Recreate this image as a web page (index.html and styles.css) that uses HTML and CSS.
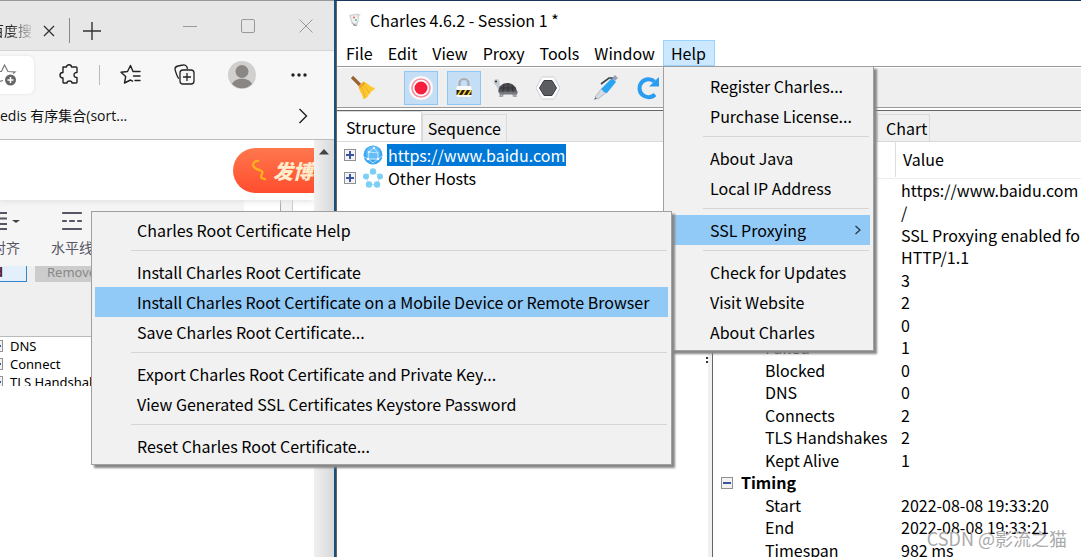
FILE: index.html
```
<!DOCTYPE html>
<html lang="en">
<head>
<meta charset="utf-8">
<title>Charles 4.6.2 - Session 1 *</title>
<link rel="stylesheet" href="styles.css">
</head>
<body>
<div class="desktop">
  <section class="browser" aria-label="Browser">
    <header class="tabstrip">
      <span class="tab-title">百度搜</span>
      <button class="tab-close" aria-label="Close tab"><svg width="12" height="12" viewBox="0 0 12 12" fill="none" stroke="#333" stroke-width="1.3"><path d="M1 1l10 10M11 1L1 11"/></svg></button>
      <i class="tab-sep"></i>
      <button class="tab-new" aria-label="New tab"><svg width="18" height="18" viewBox="0 0 18 18" fill="none" stroke="#333" stroke-width="1.4"><path d="M9 0v18M0 9h18"/></svg></button>
      <div class="win-controls">
        <button aria-label="Minimize"><svg width="14" height="14" viewBox="0 0 14 14" fill="none" stroke="#999"><path d="M0 7.5h14"/></svg></button>
        <button aria-label="Maximize"><svg width="14" height="14" viewBox="0 0 14 14" fill="none" stroke="#999"><rect x=".5" y=".5" width="13" height="13" rx="1.5"/></svg></button>
        <button aria-label="Close"><svg width="14" height="14" viewBox="0 0 14 14" fill="none" stroke="#999"><path d="M.5.5l13 13M13.5.5l-13 13"/></svg></button>
      </div>
    </header>
    <div class="navbar">
      <div class="address-end">
        <button aria-label="Add to favorites"><svg width="20" height="24" viewBox="0 0 20 24" fill="none" stroke="#777" stroke-width="1.2"><path d="M-2 9.500h3.500L4.500 3 8 9.500l7 .5-2 1.500M0 19.500l3-1"/><circle cx="10.500" cy="18" r="5.500" fill="#666" stroke="none"/><path stroke="#fff" stroke-width="1.500" d="M10.500 15v6M7.500 18h6"/></svg></button>
      </div>
      <div class="nav-tools">
        <div class="nav-group">
        <button aria-label="Extensions"><svg width="20" height="22" viewBox="0 0 20 22" fill="none" stroke="#222" stroke-width="1.400" stroke-linejoin="round"><path d="M4 3h3.500c0-3 5-3 5 0H17a1 1 0 0 1 1 1v4.500c-3.500-.5-4.500 5 0 5V18a1 1 0 0 1-1 1h-4c0-1-1-2-2.500-2S8 18 8 19H5a1 1 0 0 1-1-1v-4c-4 0-4-5.500 0-5.500z"/></svg></button>
        <i class="nav-sep"></i>
        <button aria-label="Favorites"><svg width="22" height="22" viewBox="0 0 22 22" fill="none" stroke="#222" stroke-width="1.400" stroke-linejoin="round" stroke-linecap="round"><path d="M20 7.500h-7L10.500 1.500 7.500 7.500l-6.500.7 4.700 4.300-1.200 6.500 6-3 2 1.200M13.500 12H20M15 16.500h5"/></svg></button>
        </div>
        <button aria-label="Collections"><svg width="22" height="22" viewBox="0 0 22 22" fill="none" stroke="#222" stroke-width="1.300"><path d="M5 14.500C3.500 14 1 6 1 5c0-2 1-2.500 3-3l5-1c2-.5 3 0 4 2l.5 2"/><rect x="6" y="6" width="14" height="14" rx="3"/><path d="M13 9v8M9 13h8"/></svg></button>
        <button aria-label="Profile"><svg width="28" height="28" viewBox="0 0 28 28"><circle cx="14" cy="14" r="14" fill="#d2d0ce"/><circle cx="14" cy="10.500" r="6.500" fill="#8a8684"/><path d="M4 23c3-7 17-7 20 0a14 14 0 0 1-20 0z" fill="#8a8684"/></svg></button>
        <button aria-label="More"><svg width="22" height="6" viewBox="0 0 22 6" fill="#222"><circle cx="5" cy="3" r="1.700"/><circle cx="11" cy="3" r="1.700"/><circle cx="17" cy="3" r="1.700"/></svg></button>
      </div>
    </div>
    <nav class="bookmarks">
      <a href="#">edis 有序集合(sort...</a>
      <button aria-label="More bookmarks"><svg width="10" height="16" viewBox="0 0 10 16" fill="none" stroke="#222" stroke-width="1.400"><path d="M1.500 1l7 7-7 7"/></svg></button>
    </nav>
    <div class="viewport">
      <div class="page">
        <div class="page-head">
          <button class="publish"><svg width="16" height="24" viewBox="0 0 16 24" fill="none" stroke="#ffb21a" stroke-width="2.200"><path d="M8 2C3 1 0 6 4 9s9 2 7 6-1 4 4 5.500"/></svg><span>发博</span></button>
        </div>
        <div class="editor">
          <div class="editor-tools">
            <button class="tool align"><span class="tool-icon"><svg width="20" height="20" viewBox="0 0 20 20" stroke="#555566" stroke-width="2"><path d="M-2 2h9M-2 7.500h9M-2 13h9M-2 18h9"/><path d="M12 9h8l-4 3z" fill="#444" stroke="none"/></svg></span><span>对齐</span></button>
            <button class="tool"><span class="tool-icon"><svg width="20" height="20" viewBox="0 0 20 20" stroke="#555566" stroke-width="2.200" stroke-linecap="round"><path d="M1 2h18M1 10h3M8 10h4M16 10h3M1 18h18"/></svg></span><span>水平线</span></button>
          </div>
          <div class="editor-gutter"></div>
          <div class="editor-edge"></div>
        </div>
        <div class="capture">
          <div class="capture-buttons"><span class="mini-add">d</span><span class="mini-remove">Remove</span></div>
          <ul class="mini-tree"><li><i class="box"></i>DNS</li><li><i class="box"></i>Connect</li><li><i class="box"></i>TLS Handshakes</li></ul>
        </div>
      </div>
      <div class="scrollbar"><svg width="10" height="6" viewBox="0 0 10 6"><path d="M0 5.500L5 0l5 5.500z" fill="#444"/></svg></div>
    </div>
  </section>

  <section class="charles" aria-label="Charles">
    <header class="titlebar">
      <svg width="14" height="16" viewBox="0 0 14 16"><path d="M1 3l8-1.500 4 1-2 1.500-.5 6-3 3.500-4-2z" fill="#d4d4d4"/><path d="M3 4l6-1 1 5-3 4-3-3z" fill="#f2f2f2"/><circle cx="6" cy="5.500" r="1" fill="#d66"/><circle cx="8" cy="8" r="1" fill="#5b9"/><path d="M4 11l4 2 2-2-1.500 3H6z" fill="#999"/></svg>
      <h1>Charles 4.6.2 - Session 1 *</h1>
    </header>
    <nav class="menubar">
      <button>File</button><button>Edit</button><button>View</button><button>Proxy</button><button>Tools</button><button>Window</button><button class="open">Help</button>
    </nav>
    <div class="toolbar">
      <button aria-label="Clear"><svg width="26" height="26" viewBox="0 0 26 26"><path d="M2 2l8 8" stroke="#9a6432" stroke-width="3.200"/><path d="M9 12l5-5c4 1 6 5 11 6-1 3-3 2-4 4s-2 2-3 4-3 3-5 3c0-5-4-7-4-12z" fill="#fdc82f"/><path d="M8.500 11.500l5-5 2 2-5.500 5.500z" fill="#f0a51f"/><path d="M12 13l3 9M14.500 11l5 7" stroke="#eead2b" fill="none"/></svg></button>
      <button class="on record" aria-label="Record"><svg width="26" height="26" viewBox="0 0 26 26"><circle cx="13" cy="13" r="12" fill="#fff" stroke="#e8e8ee"/><circle cx="13" cy="13" r="9" fill="#fff" stroke="#f590a2" stroke-width="1.700"/><circle cx="13" cy="13" r="6.500" fill="#f6203d"/></svg></button>
      <button class="on" aria-label="SSL proxying"><svg width="26" height="26" viewBox="0 0 26 26"><path d="M8.500 12V8.500a4.500 4.500 0 0 1 9 0V12" fill="none" stroke="#a9abb0" stroke-width="2.200"/><rect x="5.500" y="11" width="15" height="11" rx="1.500" fill="#fafafa"/><path d="M5.500 15h15v5h-15z" fill="#222"/><path d="M6 20l3-5h2l-3 5zM11 20l3-5h2l-3 5zM16 20l3-5h1.500v1L18 20z" fill="#fdc82f"/></svg></button>
      <button aria-label="Throttle"><svg width="26" height="26" viewBox="0 0 26 26"><path d="M7 18h4l-1 4H6zM19 18h4l1 4h-4z" fill="#a4a7ae"/><path d="M.5 7c0-4 6-4 6 0 0 4 1 7 4 9l-3 2C4 16 5 11 2 10z" fill="#c3cad2"/><circle cx="3" cy="6.500" r="1" fill="#222"/><path d="M5.500 17C5 5 23 5 24 17z" fill="#4c4c51"/><path d="M5 16.500h20l-1 3H7z" fill="#77797f"/><path d="M7 13h16M11 9l-1 8M15 8v9M19 10l1 7" stroke="#2b2b30" stroke-width=".7" fill="none"/></svg></button>
      <button aria-label="Breakpoints"><svg width="26" height="26" viewBox="0 0 26 26"><path d="M7 2h12l6 11-6 11H7L1 13z" fill="#fff" stroke="#d0d0d8"/><path d="M9 5.500h8l4.500 7.500-4.500 7.500H9L4.500 13z" fill="#5b5d61" stroke="#3b3d41"/></svg></button>
      <button class="pen" aria-label="Compose"><svg width="26" height="26" viewBox="0 0 26 26"><path d="M1 25l2-4 2 2z" fill="#555b66"/><path d="M2 22l7-9 5 4-9 7z" fill="#d5dae3" stroke="#aab1bd" stroke-width=".8"/><path d="M8.500 13.500L19 3l4 4-9 11c-2 0-5-2-5.500-4.500z" fill="#2ba4f2"/><path d="M8 9l8-6 4 0" stroke="#3d4148" stroke-width="1.600" fill="none"/><path d="M20.500 4.500l3-3" stroke="#9aa1b0" stroke-width="4"/></svg></button>
      <button aria-label="Repeat"><svg width="26" height="26" viewBox="0 0 26 26"><path d="M19.500 6.500a9 9 0 1 0 .5 13" fill="none" stroke="#2b9df0" stroke-width="4"/><path d="M24 2v9.500h-10z" fill="#2b9df0"/></svg></button>
    </div>
    <main class="panes">
      <section class="nav-pane">
        <div class="tabs"><button class="active">Structure</button><button>Sequence</button></div>
        <ul class="tree">
          <li><i class="box"></i><svg width="20" height="20" viewBox="0 0 20 20"><circle cx="10" cy="10" r="9.500" fill="#3aa4ef"/><circle cx="10" cy="8" r="7" fill="#63bdf7"/><path d="M5 14L6 7l5-4 4 5v6zM6 7l9 1M1 12l4 2 5 4 5-4 4-3" fill="none" stroke="#d8f0ff" stroke-width=".8"/><g fill="#fff"><circle cx="5" cy="14" r="1.300"/><circle cx="15" cy="14" r="1.300"/><circle cx="11" cy="3" r="1"/><circle cx="6" cy="7" r="1"/></g></svg><span class="selected">https://www.baidu.com</span></li>
          <li><i class="box"></i><svg width="20" height="20" viewBox="0 0 20 20"><path d="M10 3.500l7 5-3 8H6l-3-8z" fill="none" stroke="#bfe6f8"/><g fill="#7dd0f5"><circle cx="10" cy="3.500" r="3.200"/><circle cx="17" cy="8.500" r="3"/><circle cx="14" cy="16.500" r="3.200"/><circle cx="6" cy="16.500" r="3.200"/><circle cx="3" cy="8.500" r="3"/></g></svg><span>Other Hosts</span></li>
        </ul>
      </section>
      <div class="splitter"></div>
      <section class="detail-pane">
        <div class="tabs"><button class="chart">Chart</button></div>
        <table>
          <thead><tr><th></th><th><span>Value</span></th></tr></thead>
          <tbody>
            <tr><td></td><td>https://www.baidu.com</td></tr>
            <tr><td></td><td>/</td></tr>
            <tr><td></td><td>SSL Proxying enabled for</td></tr>
            <tr><td></td><td>HTTP/1.1</td></tr>
            <tr><td></td><td>3</td></tr>
            <tr><td></td><td>2</td></tr>
            <tr><td></td><td>0</td></tr>
            <tr><td>Failed</td><td>1</td></tr>
            <tr><td>Blocked</td><td>0</td></tr>
            <tr><td>DNS</td><td>0</td></tr>
            <tr><td>Connects</td><td>2</td></tr>
            <tr><td>TLS Handshakes</td><td>2</td></tr>
            <tr><td>Kept Alive</td><td>1</td></tr>
            <tr class="group"><td><i class="box minus"></i>Timing</td><td></td></tr>
            <tr><td>Start</td><td>2022-08-08 19:33:20</td></tr>
            <tr><td>End</td><td>2022-08-08 19:33:21</td></tr>
            <tr><td>Timespan</td><td>982 ms</td></tr>
          </tbody>
        </table>
      </section>
    </main>
  </section>

  <div class="menu help-menu" role="menu">
    <button role="menuitem">Register Charles...</button>
    <button role="menuitem">Purchase License...</button>
    <hr>
    <button role="menuitem">About Java</button>
    <button role="menuitem">Local IP Address</button>
    <hr>
    <button role="menuitem" class="hot">SSL Proxying<svg width="6" height="10" viewBox="0 0 6 10" fill="none" stroke="#234" stroke-width="1.200"><path d="M.5 1L5 5 .5 9"/></svg></button>
    <hr>
    <button role="menuitem">Check for Updates</button>
    <button role="menuitem">Visit Website</button>
    <button role="menuitem">About Charles</button>
  </div>
  <div class="menu ssl-menu" role="menu">
    <button role="menuitem">Charles Root Certificate Help</button>
    <hr>
    <button role="menuitem">Install Charles Root Certificate</button>
    <button role="menuitem" class="hot">Install Charles Root Certificate on a Mobile Device or Remote Browser</button>
    <button role="menuitem">Save Charles Root Certificate...</button>
    <hr>
    <button role="menuitem">Export Charles Root Certificate and Private Key...</button>
    <button role="menuitem">View Generated SSL Certificates Keystore Password</button>
    <hr>
    <button role="menuitem">Reset Charles Root Certificate...</button>
  </div>
  <div class="watermark">CSDN @影流之猫</div>
</div>
</body>
</html>
```
FILE: styles.css
```
* { box-sizing: border-box; }
body {
  margin: 0;
  font: 16px/20px "Noto Sans CJK SC", "Noto Sans", sans-serif;
  color: #000;
}
button {
  margin: 0;
  padding: 0;
  border: 0;
  background: none;
  font: inherit;
  color: inherit;
  text-align: left;
  white-space: nowrap;
}
svg { display: block; flex: none; }
ul { margin: 0; padding: 0; list-style: none; }
.desktop { position: relative; display: flex; height: 100vh; overflow: hidden; }

/* Browser window */
.browser {
  flex: 0 0 334px;
  display: flex;
  flex-direction: column;
  overflow: hidden;
  border-top: 1px solid #999;
  background: #f7f7f7;
  font-family: "Noto Sans", "Noto Sans CJK SC", sans-serif;
}
.tabstrip {
  display: flex;
  align-items: center;
  height: 50px;
  padding-top: 10px;
  background: #e7e7e7;
  border-bottom: 1px solid #d4d4d4;
}
.tab-title {
  width: 32px;
  display: flex;
  justify-content: flex-end;
  white-space: nowrap;
  font-size: 14px;
  background: linear-gradient(90deg, #222 30%, #ccc);
  background-clip: text;
  color: transparent;
}
.tab-close { margin-left: 11px; }
.tab-sep { width: 1px; height: 25px; margin: 0 13px 0 14px; background: #888; }
.win-controls { display: flex; gap: 44px; margin: 0 21px 10px auto; }
.navbar { display: flex; align-items: center; height: 48px; }
.address-end {
  width: 34px;
  height: 38px;
  padding-top: 6px;
  border-radius: 0 6px 6px 0;
  background: #fff;
  box-shadow: 0 0 3px #ddd;
}
.nav-tools { flex: 1; display: flex; align-items: center; gap: 32px; padding-left: 25px; }
.nav-group { display: flex; align-items: center; gap: 20px; }
.nav-sep { width: 1px; height: 20px; background: #bbb; }
.bookmarks {
  display: flex;
  align-items: center;
  justify-content: space-between;
  height: 41px;
  padding: 0 26px 6px 0;
  border-bottom: 1px solid #bcbcbc;
}
.bookmarks a { color: #111; text-decoration: none; font-size: 14px; font-family: "Open Sans", "Noto Sans CJK SC", sans-serif; }
.viewport { flex: 1; display: flex; min-height: 0; }
.page { flex: 1; min-width: 0; overflow: hidden; background: #fff; }
.scrollbar { width: 20px; padding: 9px 5px; background: linear-gradient(90deg, #f0f0f0, #d8d8d8); }
.page-head { display: flex; justify-content: flex-end; height: 60px; padding-top: 8px; box-shadow: 0 1px 6px #ddd; position: relative; background: #fff; }
.publish {
  display: flex;
  gap: 6px;
  align-items: center;
  width: 81px;
  height: 45px;
  padding-left: 18px;
  overflow: hidden;
  border-radius: 23px 0 0 23px;
  background: linear-gradient(#ff774d, #ff4d2e);
  color: #ffeccc;
  font: italic 900 20px/24px "Noto Sans CJK SC", sans-serif;
}
.editor { display: flex; height: 66px; }
.editor-tools { width: 244px; display: flex; gap: 31px; background: #f5f5f5; overflow: hidden; color: #555566; font-size: 14px; }
.tool { display: flex; flex-direction: column; align-items: center; gap: 7px; padding-top: 11px; }
.tool.align { width: 20px; align-items: flex-end; }
.editor-gutter { width: 37px; border-right: 1px solid #aaa; }
.editor-edge { width: 12px; background: #f3f3f3; border-right: 1px solid #ccc; }
.capture-buttons { display: flex; gap: 8px; height: 71px; background: #efefef; border-bottom: 1px solid #bbb; color: #888; font-size: 13px; line-height: 12px; }
.mini-add { width: 27px; height: 16px; border: 1px solid #2f86cf; border-width: 0 1px 1px 0; background: #e3f0fb; color: #522; font-weight: bold; direction: rtl; padding-right: 23px; }
.mini-remove { width: 80px; height: 16px; padding-left: 12px; background: #ccc; }
.mini-tree { height: 49px; overflow: hidden; font-size: 13px; line-height: 18px; }
.mini-tree li { display: flex; align-items: center; gap: 7px; }
.mini-tree .box { margin-left: -9px; }

/* Tree expanders */
.box {
  flex: none;
  width: 12px;
  height: 12px;
  border: 1px solid #919191;
  background:
    linear-gradient(#3b55a0, #3b55a0) center / 8px 2px no-repeat,
    linear-gradient(#3b55a0, #3b55a0) center / 2px 8px no-repeat,
    #f2f2f2;
}
.box.minus, .mini-tree .box { background: linear-gradient(#3b55a0, #3b55a0) center / 8px 2px no-repeat, #f2f2f2; }

/* Charles window */
.charles {
  flex: 1;
  min-width: 0;
  display: flex;
  flex-direction: column;
  padding-left: 1px;
  border-top: 1px solid #1b365d;
  border-left: 2px solid #1c4f78;
  background: linear-gradient(90deg, #666 1px, #fff 1px);
}
.titlebar { display: flex; align-items: center; gap: 8px; height: 39px; padding: 0 0 2px 11px; }
.titlebar h1 { margin: 0; font-size: 16px; font-weight: 400; }
.menubar { display: flex; height: 27px; padding-left: 2px; border-bottom: 1px solid #999; }
.menubar button { padding: 0 8px 0 7px; }
.menubar .open { background: #cce8ff; border: 1px solid #99d1ff; padding: 0 8px 0 7px; }
.toolbar { display: flex; align-items: center; gap: 8px; height: 41px; padding-left: 9px; background: #efefef; border-top: 1px solid #fff; border-bottom: 1px solid #999; }
.toolbar button { display: grid; place-items: center; width: 34px; height: 34px; }
.toolbar .on { background: #c3def5; border: 1px solid #8fc6f2; }
.toolbar .record { margin-left: 16px; }
.toolbar .on + .on { margin-left: 1px; }
.toolbar .pen { margin-left: 16px; }
.panes { flex: 1; display: flex; min-height: 0; margin-top: 2px; border-top: 1px solid #666; }
.nav-pane {
  flex: 0 0 371px;
  background: linear-gradient(#333 2px, transparent 2px 4px, #333 4px 6px) 100% 246px / 2px 6px no-repeat;
}
.splitter { width: 5px; background: #f0f0f0; border-right: 1px solid #666; }
.detail-pane { flex: 1; min-width: 0; overflow: hidden; }
.tabs { display: flex; align-items: flex-end; height: 31px; background: #efefef; border-bottom: 1px solid #d9d9d9; }
.tabs button { height: 27px; padding: 0 5px; border: 1px solid #d9d9d9; border-bottom: 0; }
.tabs .active { height: 30px; padding: 0 5px 0 9px; background: #fff; border-left: 0; }
.tabs .chart { margin-left: 164px; padding: 0 2px 0 8px; }
.tree { padding: 1px 0 0 7px; }
.tree li { display: flex; align-items: center; gap: 7px; height: 23px; }
.tree span { margin-left: -3px; padding: 0 1px; line-height: 22px; }
.tree .selected { background: #0078d7; color: #fff; }
table { width: 100%; border-collapse: collapse; table-layout: fixed; }
th, td { padding: 0; font-weight: 400; text-align: left; white-space: nowrap; }
th { height: 36px; border-bottom: 1px solid #eee; }
th:first-child { width: 182px; }
th span { display: block; padding-left: 7px; line-height: 35px; border-left: 1px solid #ddd; }
td { height: 22px; padding-left: 6px; line-height: 22px; }
tr:nth-child(even) td { height: 23px; }
td:first-child { padding-left: 52px; }
.group td:first-child { padding-left: 8px; font-weight: 700; }
.group .box { display: inline-block; margin-right: 8px; }

/* Menus over the windows */
.menu {
  position: absolute;
  display: flex;
  flex-direction: column;
  padding: 4px 3px 3px;
  border: 1px solid #a0a0a0;
  background: #f1f1f1;
  box-shadow: 3px 3px 2px #888;
}
.menu button { display: flex; align-items: center; justify-content: space-between; height: 30px; padding: 0 9px 0 43px; }
.menu hr { width: calc(100% - 37px); height: 1px; margin: 5px 1px 6px auto; border: 0; background: #d5d5d5; }
.menu .hot { background: #91c9f7; }
.help-menu { left: 663px; top: 66px; width: 211px; }
.ssl-menu { left: 91px; top: 211px; width: 581px; padding-top: 3px; }
.ssl-menu button { padding-left: 42px; }
.watermark { position: absolute; right: 14px; bottom: 6px; color: #aaa; font-size: 18px; line-height: 26px; text-shadow: 1px 1px 0 #fff; }
```
